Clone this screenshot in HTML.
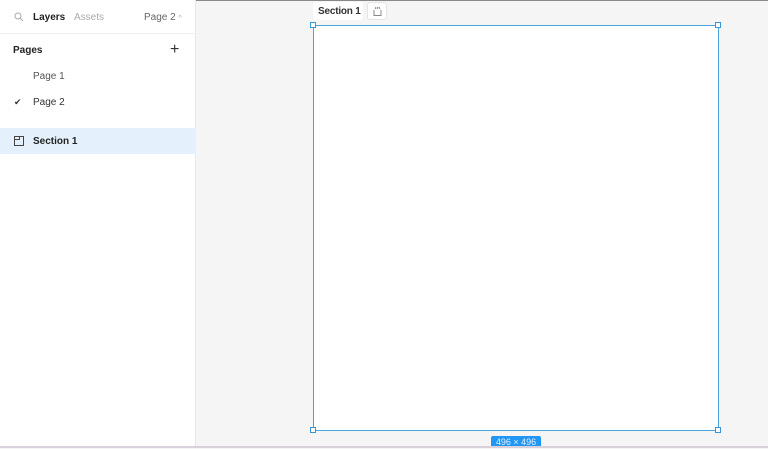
<!DOCTYPE html>
<html><head><meta charset="utf-8"><style>
*{margin:0;padding:0;box-sizing:border-box}
body{width:768px;height:448px;overflow:hidden;background:#f5f5f5;font-family:"Liberation Sans",sans-serif;position:relative}
.side{position:absolute;left:0;top:0;width:196px;height:446px;background:#fff;border-right:1px solid #e8e8e8}
.t{position:absolute;font-size:10px;color:#333;white-space:nowrap}
.topline{position:absolute;left:0;top:0;width:768px;height:1px;background:#888}
.bot{position:absolute;left:0;top:446px;width:768px;height:2px;background:#d8d0da}
.frame{position:absolute;left:313px;top:25px;width:406px;height:406px;background:#fff;border:1px solid #4aa3e0}
.h{position:absolute;width:6px;height:6px;background:#fff;border:1px solid #3a95d8}
</style></head><body>
<div class="topline"></div>
<div style="position:absolute;left:40px;top:0;width:40px;height:1px;background:#8fc3ea"></div>
<div class="side">
  <svg style="position:absolute;left:14px;top:12px" width="10" height="10" viewBox="0 0 10 10"><circle cx="4" cy="4" r="3" fill="none" stroke="#aaa" stroke-width="1"/><path d="M6.2 6.2L9 9" stroke="#aaa" stroke-width="1"/></svg>
  <div class="t" style="left:33px;top:12px;font-weight:bold;color:#222">Layers</div>
  <div class="t" style="left:74px;top:12px;color:#aaa">Assets</div>
  <div class="t" style="left:144px;top:12px;color:#666">Page 2 <span style="font-size:7px;color:#aaa">^</span></div>
  <div style="position:absolute;left:0;top:33px;width:196px;height:1px;background:#eee"></div>
  <div class="t" style="left:13px;top:45px;font-weight:bold;color:#222">Pages</div>
  <div style="position:absolute;left:170px;top:43px;font-size:16px;color:#333;line-height:14px">+</div>
  <div class="t" style="left:33px;top:71px;color:#555">Page 1</div>
  <div class="t" style="left:14px;top:97px;font-size:9px">✔</div>
  <div class="t" style="left:33px;top:97px;color:#333">Page 2</div>
  <div style="position:absolute;left:0;top:128px;width:196px;height:26px;background:#e4f1fc"></div>
  <svg style="position:absolute;left:14px;top:136px" width="10" height="10" viewBox="0 0 10 10"><rect x="0.5" y="0.5" width="9" height="9" fill="none" stroke="#444"/><path d="M0.5 3.5H5.5V0.5" fill="none" stroke="#444"/></svg>
  <div class="t" style="left:33px;top:136px;font-weight:bold;color:#222">Section 1</div>
</div>
<div style="position:absolute;left:313px;top:2px;width:50px;height:18px;background:#fff;border-radius:3px;font-size:10px;font-weight:bold;color:#333;padding:4px 0 0 5px;white-space:nowrap;letter-spacing:-0.2px">Section 1</div>
<div style="position:absolute;left:367px;top:2px;width:20px;height:18px;background:#fff;border-radius:3px;border:1px solid #e5e5e5"><svg style="position:absolute;left:4px;top:3px" width="11" height="11" viewBox="0 0 11 11"><path d="M2 4V9.5H9V4" fill="none" stroke="#888"/><path d="M4 1L3 3M7 1L8 3M5 3L6 1" stroke="#888"/></svg></div>
<div class="frame"></div>
<div class="h" style="left:310px;top:22px"></div>
<div class="h" style="left:715px;top:22px"></div>
<div class="h" style="left:310px;top:427px"></div>
<div class="h" style="left:715px;top:427px"></div>
<div style="position:absolute;left:491px;top:436px;width:50px;height:12px;background:#2196f3;border-radius:2px;color:#e6f2ff;font-size:9px;text-align:center;line-height:13px">496 × 496</div>
<div class="bot"></div>
</body></html>
